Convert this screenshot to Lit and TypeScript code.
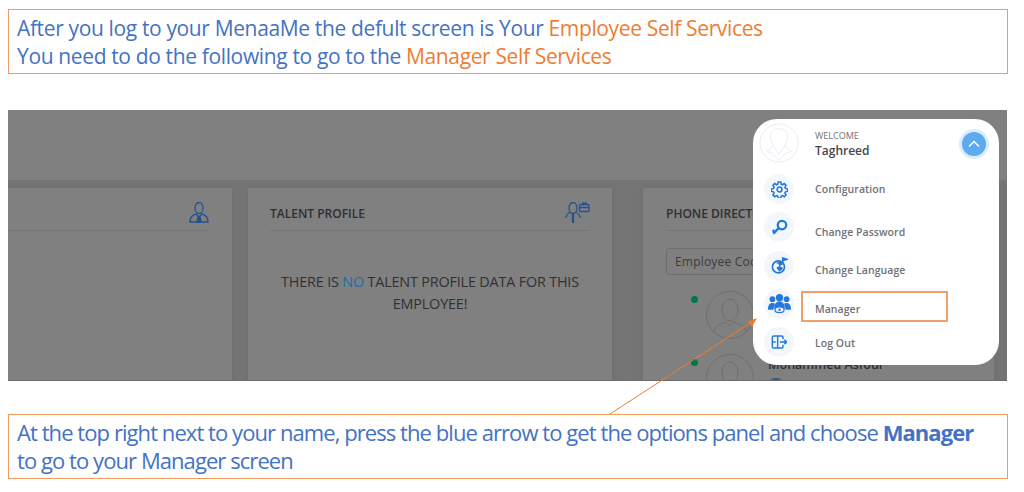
import { LitElement, css, html, svg } from 'lit';
import { customElement } from 'lit/decorators.js';

const ICON = {
    gear: svg`<circle cx="12" cy="12" r="3.4"/><path d="M10.2 1.500h3.600l.6 3 1.800.8 2.500-1.700 2.600 2.600-1.700 2.500.8 1.800 3 .6v3.600l-3 .6-.8 1.800 1.700 2.500-2.600 2.600-2.500-1.700-1.800.8-.6 3h-3.600l-.6-3-1.800-.8-2.500 1.700-2.600-2.600 1.700-2.500-.8-1.800-3-.6v-3.600l3-.6.8-1.800-1.700-2.500 2.600-2.600 2.500 1.700 1.800-.8z"/>`,
    key: svg`<circle cx="15.500" cy="8.500" r="6" stroke-width="3.200"/><path d="M11 13 3 20.500M2.500 15.500 6.500 20" stroke-width="3.400"/>`,
    globe: svg`<circle cx="10.500" cy="14" r="8.500" stroke-width="2.400"/><path d="M6 8.500c3 .5 6 1.500 5.500 4s-3.500 1-3.500 3 3 1.500 3 5.500l4-2.500c2.500-2 1.500-4.500-.5-4.500s-1.500-3 2.500-3.500L14 6.500z" fill="currentColor" stroke="none"/><path d="M16.500 8V1.500l6 1.700-6 2.300" fill="currentColor"/>`,
    team: svg`<g fill="currentColor" stroke="none"><circle cx="12" cy="6" r="3.800"/><circle cx="4.600" cy="7.500" r="3"/><circle cx="19.400" cy="7.500" r="3"/><path d="M0 18.500c0-4.500 1.500-7 4.500-7 1.500 0 2.500.5 2.500 1l-1.500 6zM24 18.500c0-4.500-1.500-7-4.500-7-1.500 0-2.500.5-2.500 1l1.500 6zM6.500 17c0-4.500 2-7 5.500-7s5.500 2.500 5.500 7l-1 2h-9z"/></g><ellipse cx="12" cy="18.500" rx="4.800" ry="3" fill="#f3f7fc" stroke-width="1.300"/><circle cx="12" cy="18.500" r="1.300" fill="currentColor" stroke="none"/>`,
    logout: svg`<path d="M18 8V5a2 2 0 0 0-2-2H4a2 2 0 0 0-2 2v14a2 2 0 0 0 2 2h12a2 2 0 0 0 2-2v-3M10 3v18M2 12h5M13 12h10M20 8.500l3.500 3.500-3.500 3.500"/>`,
};

const MENU = [
    { icon: ICON.gear, label: 'Configuration', height: 38, size: 17, drop: 0 },
    { icon: ICON.key, label: 'Change Password', height: 38, size: 17, drop: 9 },
    { icon: ICON.globe, label: 'Change Language', height: 39, size: 17, drop: 9 },
    { icon: ICON.team, label: 'Manager', height: 37, size: 23, drop: 10, boxed: true },
    { icon: ICON.logout, label: 'Log Out', height: 39, size: 16, drop: 2 },
];

@customElement('app-root')
export class AppRoot extends LitElement {
    static styles = css`
        :host {
            display: block;
            position: relative;
            width: 1024px;
            height: 492px;
            overflow: hidden;
            background: #fff;
            font-family: 'Open Sans', sans-serif;
        }

        .note {
            margin: 0 16px 0 8px;
            border: 1px solid #f29a5e;
            color: #4472c4;
            font-size: 21px;
            letter-spacing: -0.36px;
            line-height: 28px;
            padding: 4px 8px;
            height: 65px;
            box-sizing: border-box;
            white-space: nowrap;
        }

        .note.top {
            margin-top: 9px;
        }

        .note.bottom {
            margin-top: 33px;
            padding-top: 3px;
            font-size: 22px;
            letter-spacing: -0.93px;
            line-height: 28px;
        }

        .note em {
            color: #ed7d31;
            font-style: normal;
        }

        .shot {
            position: relative;
            margin: 36px 17px 0 8px;
            height: 271px;
            overflow: hidden;
            background: #757575;
            border-bottom: 1px solid #6a6a6a;
            box-sizing: border-box;
        }

        .topbar {
            height: 70px;
            background: #808080;
        }

        .cards {
            display: grid;
            grid-template-columns: 224px 364px 366px;
            column-gap: 16px;
            margin-top: 8px;
            height: 193px;
        }

        .card {
            background: #808080;
            box-shadow: 0 0 6px #6c6c6c;
            padding: 12px 22px 0;
            color: #2f2f33;
        }

        .card.first {
            padding-left: 0;
        }

        .card.last {
            margin-left: 15px;
            padding-left: 23px;
        }

        .head {
            display: flex;
            justify-content: space-between;
            align-items: center;
            height: 26px;
            padding-bottom: 4px;
            border-bottom: 1px solid #757575;
            font-size: 12px;
            font-weight: 600;
            white-space: nowrap;
        }

        .head svg {
            fill: none;
            stroke: #24518f;
            stroke-width: 1.300;
        }

        .first .head {
            justify-content: flex-end;
            margin-right: 1px;
        }

        .empty {
            margin-top: 40px;
            text-align: center;
            font-size: 14.400px;
            font-weight: 500;
            line-height: 22px;
            letter-spacing: -0.18px;
            color: #303033;
        }

        .empty b {
            color: #1a6fa5;
            font-weight: 500;
        }

        .code {
            margin-top: 17px;
            height: 27px;
            width: 200px;
            box-sizing: border-box;
            border: 1px solid #6e6e6e;
            border-radius: 3px;
            padding-left: 8px;
            font-size: 12px;
            line-height: 25px;
            letter-spacing: 0.2px;
            color: #3c3c3e;
            white-space: nowrap;
        }

        .people {
            margin-top: 16px;
            margin-left: 25px;
        }

        .person {
            display: flex;
            align-items: flex-start;
            gap: 8px;
            height: 63px;
        }

        .dot {
            width: 7px;
            height: 7px;
            margin-top: 5px;
            border-radius: 50%;
            background: #00784a;
        }

        .person svg {
            flex: none;
            fill: none;
            stroke: #6f6f6f;
            stroke-width: 1;
        }

        .details {
            margin: 2px 0 0 6px;
            font-size: 12.500px;
            font-weight: 600;
            line-height: 18px;
            white-space: nowrap;
        }

        .ext {
            width: 16px;
            height: 16px;
            margin-top: 4px;
            border-radius: 50%;
            background: #1c5a94;
        }

        .panel {
            position: absolute;
            left: 745px;
            top: 9px;
            width: 246px;
            height: 246px;
            box-sizing: border-box;
            padding: 4px 0 0 6px;
            background: #fff;
            border-radius: 24px;
            color: #6f7276;
            font-size: 10.500px;
        }

        .user {
            display: flex;
            align-items: center;
            height: 40px;
            margin-bottom: 7px;
        }

        .user svg {
            fill: none;
            stroke: #e6ebf3;
            stroke-width: 1;
        }

        .who {
            margin-left: 16px;
            flex: 1;
            margin-top: 3px;
        }

        .welcome {
            font-size: 9px;
            line-height: 12px;
        }

        .name {
            color: #45474b;
            font-size: 12px;
            font-weight: 600;
            line-height: 18px;
        }

        .toggle {
            display: grid;
            place-items: center;
            width: 24px;
            height: 24px;
            margin: 2px 13px 0 0;
            border-radius: 50%;
            background: #5daaee;
            box-shadow: 0 0 0 3px #dcecfb;
        }

        .toggle svg {
            fill: none;
            stroke: #fff;
            stroke-width: 1.400;
        }

        .item {
            display: flex;
            align-items: center;
            margin-left: 5px;
            position: relative;
        }

        .badge {
            flex: none;
            display: grid;
            place-items: center;
            width: 30px;
            height: 30px;
            border-radius: 50%;
            background: #f3f7fc;
            color: #2279dc;
        }

        .badge svg {
            fill: none;
            stroke: currentColor;
            stroke-width: 2.200;
        }

        .label {
            margin-left: 21px;
            letter-spacing: 0.05px;
            font-weight: 600;
        }

        .boxed {
            position: absolute;
            left: 37px;
            top: 6px;
            width: 147px;
            height: 31px;
            border: 2px solid #f0a06a;
            box-sizing: border-box;
        }

        .pointer {
            position: absolute;
            left: 0;
            top: 0;
            pointer-events: none;
        }
    `;

    render() {
        return html`
            <div class="note top">
                After you log to your MenaaMe the defult screen is Your <em>Employee Self Services</em><br />
                You need to do the following to go to the <em>Manager Self Services</em>
            </div>

            <div class="shot">
                <div class="topbar"></div>
                <div class="cards">
                    <div class="card first">
                        <div class="head">
                            <svg width="20" height="22" viewBox="0 0 20 22">
                                <ellipse cx="10" cy="6" rx="4" ry="5.500" />
                                <path d="M7 12c-4 1-6 3-6 8h18c0-5-2-7-6-8l-3 3z" />
                                <path d="M9 15h2l1 5H8z" fill="#24518f" />
                            </svg>
                        </div>
                    </div>
                    <div class="card">
                        <div class="head">
                            TALENT PROFILE
                            <svg width="25" height="22" viewBox="0 0 25 22">
                                <ellipse cx="8" cy="6" rx="4" ry="5.500" />
                                <path d="M1 16c0-3 2-5 4.500-6M15 16c0-3-2-5-4.500-6M8 12v9" />
                                <path d="M8 12v9" stroke-width="2.400" />
                                <rect x="14.500" y="2.500" width="9.500" height="7" rx="1" />
                                <path d="M14.500 5.500h9.500M18 2.500V1h3v1.500" />
                            </svg>
                        </div>
                        <div class="empty">THERE IS <b>NO</b> TALENT PROFILE DATA FOR THIS<br />EMPLOYEE!</div>
                    </div>
                    <div class="card last">
                        <div class="head">PHONE DIRECTORY</div>
                        <div class="code">Employee Code</div>
                        <div class="people">
                            <div class="person">
                                <span class="dot"></span>
                                ${this.avatar()}
                            </div>
                            <div class="person">
                                <span class="dot"></span>
                                ${this.avatar()}
                                <div class="details">
                                    Mohammed Asfour
                                    <div class="ext"></div>
                                </div>
                            </div>
                        </div>
                    </div>
                </div>

                <div class="panel">
                    <div class="user">
                        <svg width="40" height="40" viewBox="0 0 42 42">
                            <circle cx="21" cy="21" r="20" />
                            <path d="M21 6c-6 0-9 4-9 9 0 4 2 6 3 9l-7 6 5 1 8 8 8-8 5-1-7-6c1-3 3-5 3-9 0-5-3-9-9-9z" />
                            <path d="M15 24l6 9 6-9" />
                        </svg>
                        <div class="who">
                            <div class="welcome">WELCOME</div>
                            <div class="name">Taghreed</div>
                        </div>
                        <div class="toggle">
                            <svg width="12" height="8" viewBox="0 0 12 8"><path d="M1 6.500 6 1.500l5 5" /></svg>
                        </div>
                    </div>
                    ${MENU.map(
                        (m) => html`
                            <div class="item" style="height:${m.height}px">
                                <span class="badge">
                                    <svg width=${m.size} height=${m.size} viewBox="0 0 24 24">${m.icon}</svg>
                                </span>
                                <span class="label" style="margin-top:${m.drop}px">${m.label}</span>
                                ${m.boxed ? html`<span class="boxed"></span>` : ''}
                            </div>
                        `,
                    )}
                </div>
            </div>

            <div class="note bottom">
                At the top right next to your name, press the blue arrow to get the options panel and choose
                <strong>Manager</strong><br />
                to go to your Manager screen
            </div>

            <svg class="pointer" width="1024" height="492">
                <path d="M610 414 753 321" stroke="#ed7d31" stroke-width="1" fill="none" />
                <path d="M757 318 748 321.500 752 327z" fill="#ed7d31" />
            </svg>
        `;
    }

    avatar() {
        return html`
            <svg width="48" height="48" viewBox="0 0 48 48">
                <circle cx="24" cy="24" r="23.500" />
                <ellipse cx="24" cy="19" rx="8" ry="11" />
                <path d="M8 40c2-6 7-7 12-9l4 4 4-4c5 2 10 3 12 9" />
            </svg>
        `;
    }
}
